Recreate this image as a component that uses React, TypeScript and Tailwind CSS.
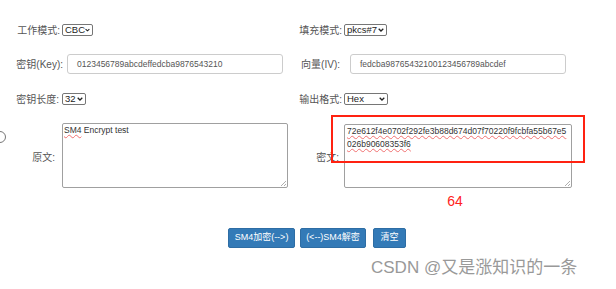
import React from 'react';

const font = { fontFamily: '"Liberation Sans", "Noto Sans CJK SC", sans-serif' };

function Select({ value, width }: { value: string; width: string }) {
    return (
        <div className={`${width} h-[12px] border border-[#767676] rounded-[2px] bg-white flex items-center justify-between pl-[2px] pr-[2px] text-[9.5px] leading-none text-[#222]`}>
            <span>{value}</span>
            <svg width="6" height="4" viewBox="0 0 6 4">
                <path d="M0.7 0.8 L3 3 L5.3 0.8" fill="none" stroke="#222" strokeWidth="1.3" />
            </svg>
        </div>
    );
}

function Grip() {
    return (
        <svg className="absolute right-[1px] bottom-[1px]" width="6" height="6" viewBox="0 0 6 6">
            <path d="M6 1 L1 6 M6 4 L4 6" stroke="#9a9a9a" strokeWidth="0.8" />
        </svg>
    );
}

export default function App() {
    return (
        <div className="relative w-[616px] h-[289px] bg-white overflow-hidden text-[#555]" style={font}>
            {/* radio cut off at the left edge */}
            <div className="absolute -left-[6px] top-[131px] w-[12px] h-[12px] rounded-full border border-[#777]" />

            <div className="flex flex-col pt-[20px]">
                {/* row 1 */}
                <div className="flex h-[20px] items-center">
                    <div className="w-[290px] flex items-center">
                        <span className="w-[60px] text-right text-[10px]">工作模式:</span>
                        <div className="ml-[2px]"><Select value="CBC" width="w-[31px]" /></div>
                    </div>
                    <div className="flex items-center">
                        <span className="w-[52px] text-right text-[10px]">填充模式:</span>
                        <div className="ml-[2px]"><Select value="pkcs#7" width="w-[43px]" /></div>
                    </div>
                </div>

                {/* row 2 */}
                <div className="flex h-[20px] items-center mt-[14px]">
                    <div className="w-[290px] flex items-center">
                        <span className="w-[63px] text-right text-[10px]">密钥(Key):</span>
                        <div className="ml-[4px] w-[216px] h-[20px] border border-[#ccc] rounded-[3px] flex items-center pl-[9px] text-[8.5px] text-[#555]">
                            0123456789abcdeffedcba9876543210
                        </div>
                    </div>
                    <div className="flex items-center">
                        <span className="w-[50px] text-right text-[10px]">向量(IV):</span>
                        <div className="ml-[10px] w-[216px] h-[20px] border border-[#ccc] rounded-[3px] flex items-center pl-[9px] text-[8.5px] text-[#555]">
                            fedcba98765432100123456789abcdef
                        </div>
                    </div>
                </div>

                {/* row 3 */}
                <div className="flex h-[20px] items-center mt-[15px]">
                    <div className="w-[290px] flex items-center">
                        <span className="w-[59px] text-right text-[10px]">密钥长度:</span>
                        <div className="ml-[3px]"><Select value="32" width="w-[24px]" /></div>
                    </div>
                    <div className="flex items-center">
                        <span className="w-[52px] text-right text-[10px]">输出格式:</span>
                        <div className="ml-[2px]"><Select value="Hex" width="w-[44px]" /></div>
                    </div>
                </div>

                {/* row 4 */}
                <div className="flex items-center mt-[14px]">
                    <div className="w-[290px] flex items-center">
                        <span className="w-[55px] text-right text-[10px] pt-[4px]">原文:</span>
                        <div className="relative ml-[7px] w-[226px] h-[65px] border border-[#a0a0a0] rounded-[2px] px-[1px] text-[8.5px] leading-[13px] text-[#333]">
                            <span className="underline decoration-wavy decoration-[#f07070] decoration-1">SM4</span> Encrypt test
                            <Grip />
                        </div>
                    </div>
                    <div className="flex items-center">
                        <span className="w-[49px] text-right text-[10px] pt-[4px]">密文:</span>
                        <div className="relative ml-[5px] w-[228px] h-[64px] border border-[#a0a0a0] rounded-[2px] px-[2px] text-[8.5px] leading-[13px] text-[#333] break-all">
                            <span className="underline decoration-wavy decoration-[#f07070] decoration-1">72e612f4e0702f292fe3b88d674d07f70220f9fcbfa55b67e5</span>
                            <br />
                            <span className="underline decoration-wavy decoration-[#f07070] decoration-1">026b90608353f6</span>
                            <Grip />
                        </div>
                    </div>
                </div>

                {/* length */}
                <div className="flex mt-[4px]">
                    <div className="ml-[344px] w-[222px] text-center text-[14px] leading-[18px] text-[#f22]">64</div>
                </div>

                {/* buttons */}
                <div className="flex mt-[18px] ml-[228px] text-[9px] text-white">
                    <button className="h-[20px] w-[67px] bg-[#337ab7] border border-[#2e6da4] rounded-[2px]">SM4加密(--&gt;)</button>
                    <button className="ml-[5px] h-[20px] w-[66px] bg-[#337ab7] border border-[#2e6da4] rounded-[2px]">(&lt;--)SM4解密</button>
                    <button className="ml-[7px] h-[20px] w-[33px] bg-[#337ab7] border border-[#2e6da4] rounded-[2px]">清空</button>
                </div>
            </div>

            {/* red annotation box */}
            <div className="absolute left-[331px] top-[115px] w-[254px] h-[48px] border-2 border-[#f21] pointer-events-none" />

            {/* watermark */}
            <div className="absolute left-[371px] top-[258px] text-[17px] leading-[20px] text-[#999] [text-shadow:0_0_1px_#fff]">
                CSDN @又是涨知识的一条
            </div>
        </div>
    );
}
